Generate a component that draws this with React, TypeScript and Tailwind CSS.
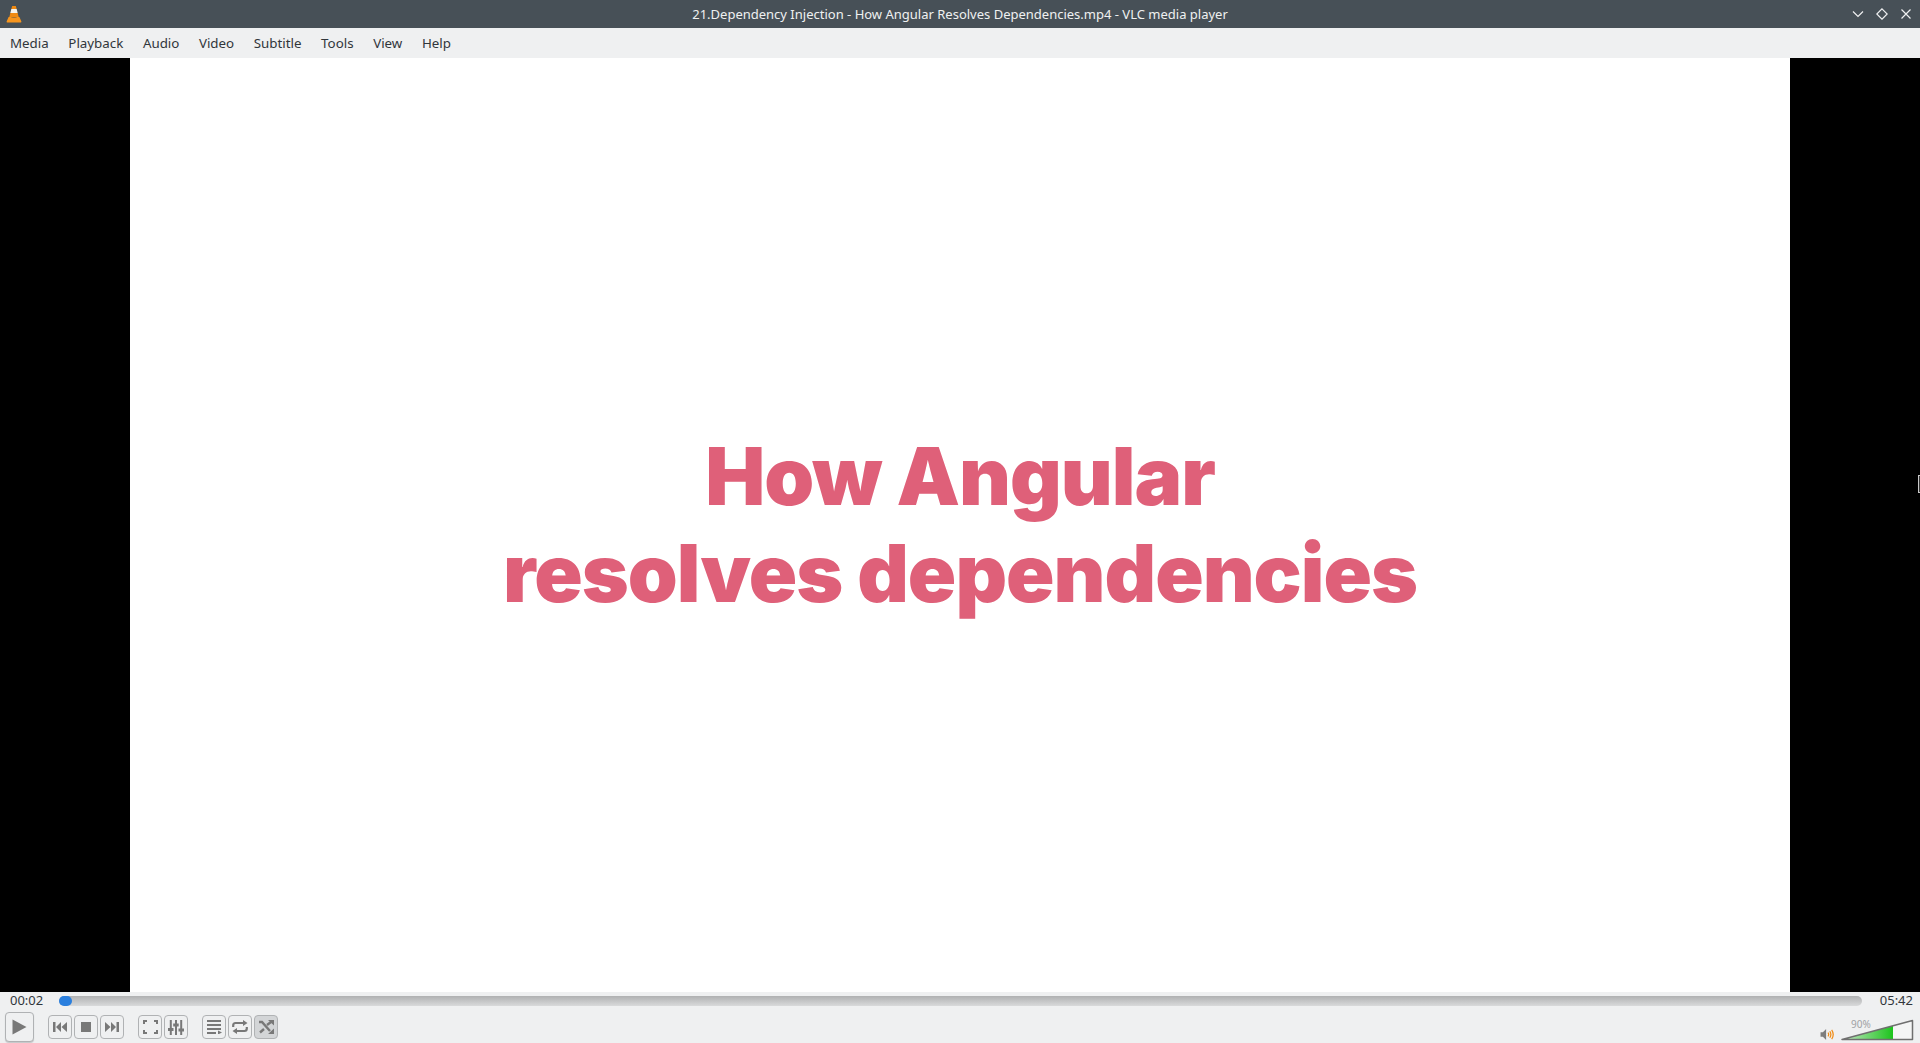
import React from "react";

const menus = ["Media", "Playback", "Audio", "Video", "Subtitle", "Tools", "View", "Help"];

function Cone() {
  return (
    <svg width="16" height="18" viewBox="0 0 16 18">
      <path d="M6.200 1h3.600l.9 3H5.300z" fill="#f08a12" />
      <path d="M5.300 4h5.400l1 4H4.300z" fill="#f6f3ec" />
      <path d="M4.300 8h7.400l1.100 4.500H3.200z" fill="#f08a12" />
      <path d="M2.600 12H5c1 1.200 5 1.200 6 0h2.400l1.900 4.300c.3.800-.2 1.200-.8 1.200h-13c-.6 0-1.100-.4-.8-1.200z" fill="#f7951d" />
    </svg>
  );
}

function CtlButton({ children, active, large }: { children: React.ReactNode; active?: boolean; large?: boolean }) {
  return (
    <button
      className={`flex items-center justify-center rounded-[4px] border-[1.5px] border-[#b0b2b4] ${
        large ? "h-[30px] w-[29px] shadow-[0_1px_1px_#c4c6c8]" : "h-[24px] w-[24px]"
      } ${active ? "bg-[#d3d5d7]" : "bg-[#eff0f1]"}`}
    >
      {children}
    </button>
  );
}

const icon = "#787878";

function PlayIcon() {
  return (
    <svg width="15" height="16" viewBox="0 0 15 16"><path d="M0.500 0.500 14.500 8 0.500 15.500z" fill={icon} /></svg>
  );
}
function PrevIcon() {
  return (
    <svg width="14" height="10" viewBox="0 0 14 10" fill={icon}><path d="M0 0h2.500v10H0zM8 0v10L3 5zM14 0v10L8.500 5z" /></svg>
  );
}
function StopIcon() {
  return <div className="h-[10px] w-[10px] bg-[#787878]" />;
}
function NextIcon() {
  return (
    <svg width="14" height="10" viewBox="0 0 14 10" fill={icon}><path d="M14 0h-2.500v10H14zM6 0v10l5-5zM0 0v10l5.500-5z" /></svg>
  );
}
function FullIcon() {
  return (
    <svg width="15" height="14" viewBox="0 0 15 14" fill="none" stroke={icon} strokeWidth="2"><path d="M1 4V1h3M11 1h3v3M14 10v3h-3M4 13H1v-3" /></svg>
  );
}
function EqIcon() {
  return (
    <svg width="16" height="15" viewBox="0 0 16 15" fill={icon}>
      <path d="M1.800 0h2v15h-2zM7 0h2v15H7zM12.200 0h2v15h-2z" />
      <path d="M0 8h5.500v3H0zM5.200 3.500h5.500v3H5.200zM10.500 8.500H16v3h-5.500z" />
    </svg>
  );
}
function ListIcon() {
  return (
    <svg width="15" height="14" viewBox="0 0 15 14" fill={icon}>
      <path d="M0 0h14v2H0zM0 4h14v2H0zM0 8h14v2H0zM0 12h9v2H0zM11 10.500 15 12.500 11 14.500z" />
    </svg>
  );
}
function LoopIcon() {
  return (
    <svg width="16" height="14" viewBox="0 0 16 14" fill="none" stroke={icon} strokeWidth="2.200">
      <path d="M1.200 7V5.500c0-1.300.8-2.500 2.300-2.500H12" />
      <path d="M14.800 7v1.500c0 1.300-.8 2.500-2.300 2.500H4" />
      <path d="M11 0v6l4.500-3zM5 8v6l-4.500-3z" fill={icon} stroke="none" />
    </svg>
  );
}
function ShuffleIcon() {
  return (
    <svg width="15" height="14" viewBox="0 0 15 14" fill="none" stroke={icon} strokeWidth="2.400">
      <path d="M0 2h3l8 9" />
      <path d="M1 12.500l4-3.500M8 5l4-3" />
      <path d="M9 0h6v5.500zM15 14H9l6-5.500z" fill={icon} stroke="none" />
    </svg>
  );
}
function SpeakerIcon() {
  return (
    <svg width="15" height="13" viewBox="0 0 15 14" fill="none">
      <path d="M0 4.500h2.500L6 1v12l-3.500-3.500H0z" fill="#7d7d7d" />
      <path d="M8 5c.8 1 .8 3 0 4M10 3.500c1.300 2 1.300 5 0 7M12 2c2 3 2 7 0 10" stroke="#f08a12" strokeWidth="1.300" />
    </svg>
  );
}

function VolumeSlider() {
  return (
    <div className="relative h-[22px] w-[73px]">
      <svg width="73" height="22" viewBox="0 0 73 22" className="absolute inset-0">
        <defs>
          <linearGradient id="vol" x1="0" x2="1" y1="0" y2="0">
            <stop offset="0" stopColor="#c9e8c9" />
            <stop offset="1" stopColor="#1cc41c" />
          </linearGradient>
        </defs>
        <path d="M1 20.500 71.500 1.500V20.500z" fill="#f4f5f5" />
        <path d="M1 20.500 52 6.800V20.500z" fill="url(#vol)" />
        <path d="M1 20.500 71.500 1.500V20.500z" fill="none" stroke="#6f6f6f" strokeWidth="1.500" strokeLinejoin="round" />
      </svg>
      <span className="absolute left-[10px] top-[-1px] text-[10px] leading-[12px] text-[#a0a2a5]">90%</span>
    </div>
  );
}

export default function App() {
  return (
    <div className="relative flex h-[1043px] w-[1920px] flex-col overflow-hidden bg-[#eff0f1] font-['Noto_Sans',sans-serif] text-[13px] text-[#31363b]">
      {/* title bar */}
      <div className="relative flex h-[28px] items-center justify-center bg-[#475057] pt-[1px] text-[#eff0f1]">
        <div className="absolute left-[6px] top-[5px]">
          <Cone />
        </div>
        <span>21.Dependency Injection - How Angular Resolves Dependencies.mp4 - VLC media player</span>
        <div className="absolute right-[8px] top-[8px] flex items-center gap-[12px] text-[#eff0f1]">
          <svg width="12" height="12" viewBox="0 0 12 12" fill="none" stroke="currentColor" strokeWidth="1.200"><path d="M1 3.500 6 8.500l5-5" /></svg>
          <svg width="12" height="12" viewBox="0 0 12 12" fill="none" stroke="currentColor" strokeWidth="1.200"><path d="M6 .8 11.200 6 6 11.200.8 6z" /></svg>
          <svg width="12" height="12" viewBox="0 0 12 12" fill="none" stroke="currentColor" strokeWidth="1.200"><path d="M1.500 1.500l9 9M10.500 1.500l-9 9" /></svg>
        </div>
      </div>

      {/* menu bar */}
      <div className="flex h-[30px] items-center gap-[19.600px] px-[10px] pt-[1px] text-[13.330px]">
        {menus.map((m) => (
          <span key={m}>{m}</span>
        ))}
      </div>

      {/* video */}
      <div className="flex h-[934px] bg-black px-[130px]">
        <div className="flex flex-1 flex-col items-center justify-center bg-white pb-[2px]">
          <div className="text-center font-['Inter',sans-serif] text-[80px] leading-[97px] font-black tracking-[-1px] text-[#df6079]">
            <div>How Angular</div>
            <div>resolves dependencies</div>
          </div>
        </div>
      </div>

      {/* controls */}
      <div className="flex flex-1 flex-col">
        <div className="flex h-[18px] items-center">
          <span className="w-[59px] pl-[10px]">00:02</span>
          <div className="h-[10px] flex-1 rounded-[5px] bg-gradient-to-b from-[#b0b1b2] to-[#d9dadb]">
            <div className="h-[10px] w-[13px] rounded-[5px] bg-[#2a7fde]" />
          </div>
          <span className="w-[58px] pr-[7px] text-right">05:42</span>
        </div>
        <div className="flex flex-1 items-center pl-[5px] pr-[6px] pt-[1px]">
          <CtlButton large>
            <PlayIcon />
          </CtlButton>
          <div className="ml-[14px] flex gap-[2px]">
            <CtlButton><PrevIcon /></CtlButton>
            <CtlButton><StopIcon /></CtlButton>
            <CtlButton><NextIcon /></CtlButton>
          </div>
          <div className="ml-[14px] flex gap-[2px]">
            <CtlButton><FullIcon /></CtlButton>
            <CtlButton><EqIcon /></CtlButton>
          </div>
          <div className="ml-[14px] flex gap-[2px]">
            <CtlButton><ListIcon /></CtlButton>
            <CtlButton><LoopIcon /></CtlButton>
            <CtlButton active><ShuffleIcon /></CtlButton>
          </div>
          <div className="ml-auto flex items-end gap-[6px] self-end pb-[2px]">
            <SpeakerIcon />
            <VolumeSlider />
          </div>
        </div>
      </div>

      {/* resize handle at the window edge */}
      <div className="absolute right-0 top-[475px] h-[18px] w-[2px] border border-r-0 border-[#c8c8c8] bg-[#333]" />
    </div>
  );
}
